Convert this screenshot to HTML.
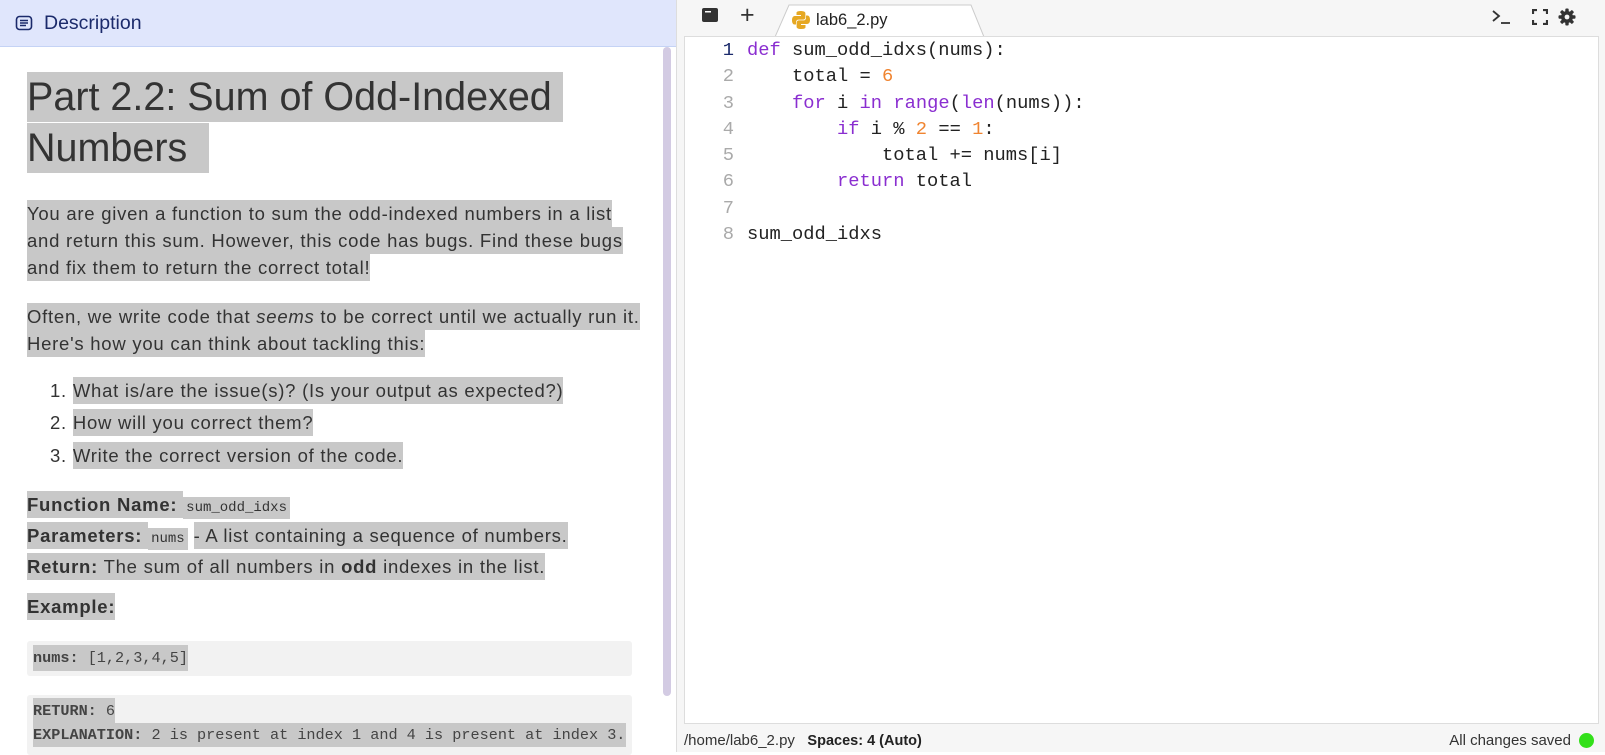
<!DOCTYPE html>
<html><head><meta charset="utf-8"><style>
*{margin:0;padding:0;box-sizing:border-box}
body{width:1605px;height:752px;overflow:hidden;background:#fff;font-family:"Liberation Sans",sans-serif;position:relative}
.left{position:absolute;left:0;top:0;width:677px;height:752px;border-right:1px solid #ddd;background:#fff}
.hdr{height:47px;background:#e0e6fc;border-bottom:1px solid #c5d3f5;display:flex;align-items:center;padding-left:15px;color:#1b2a6b;font-size:19.5px}
.hdr svg{margin-right:11px}
.sb{position:absolute;left:663px;top:47px;width:8px;height:649px;background:#d3cbe3;border-radius:4px}
.b{position:absolute;left:27px;color:#333}
.hl{background:#c8c8c8}
h1{font-weight:normal;font-size:39.5px;line-height:51px}
h1 .hl{padding:3px 0}
.p{font-size:18.5px;letter-spacing:0.75px;line-height:27px;white-space:nowrap}
.p .hl{padding:3px 0}
.m{font-family:"Liberation Mono",monospace;font-size:14px;letter-spacing:0;background:#c8c8c8;padding:3px 3px}
.pre{position:absolute;left:27px;width:605px;background:#f2f2f2;border-radius:3px;font-family:"Liberation Mono",monospace;font-size:15.2px;color:#444;padding:3px 6px;white-space:nowrap}
.right{position:absolute;left:677px;top:0;width:928px;height:752px;background:#f6f6f6}
.ed{position:absolute;left:7px;top:36px;width:915px;height:688px;background:#fff;border:1px solid #ddd}
.code{position:absolute;left:0;top:0;font-family:"Liberation Mono",monospace;font-size:18.75px;line-height:26.3px;color:#222;white-space:pre}
.ln{display:inline-block;width:49px;text-align:right;color:#aaa;margin-right:13px}
.k{color:#8a2ed0}.n{color:#f08430}
.st{position:absolute;left:7px;top:732px;font-size:15px;color:#333}
</style></head><body>
<div class="left">
<div class="hdr"><svg width="18" height="16" viewBox="0 0 18 16"><rect x="1.5" y="1.5" width="15" height="13" rx="3" fill="none" stroke="#1b2a6b" stroke-width="1.6"/><path d="M5 5.5h8M5 8h8M5 10.5h6" stroke="#1b2a6b" stroke-width="1.4"/></svg>Description</div>
<div class="sb"></div>
<div class="b" style="top:72px"><h1><span class="hl">Part 2.2: Sum of Odd-Indexed&nbsp;</span><br><span class="hl">Numbers&nbsp;&nbsp;</span></h1></div>
<div class="b p" style="top:200px"><span class="hl">You are given a function to sum the odd-indexed numbers in a list </span><br><span class="hl">and return this sum. However, this code has bugs. Find these bugs </span><br><span class="hl">and fix them to return the correct total!</span></div>
<div class="b p" style="top:303px"><span class="hl">Often, we write code that <i>seems</i> to be correct until we actually run it. </span><br><span class="hl">Here's how you can think about tackling this:</span></div>
<div class="b p" style="top:375px;left:50px;line-height:32.3px">
<div>1. <span class="hl">What is/are the issue(s)? (Is your output as expected?)</span></div>
<div>2. <span class="hl">How will you correct them?</span></div>
<div>3. <span class="hl">Write the correct version of the code.</span></div>
</div>
<div class="b p" style="top:491px;line-height:28px"><span class="hl"><b>Function Name:</b> </span> <span class="m">sum_odd_idxs</span><span class="hl"> </span><br><span class="hl"><b>Parameters:</b> </span> <span class="m">nums</span> <span class="hl">- A list containing a sequence of numbers. </span><br><span class="hl"><b>Return:</b> The sum of all numbers in <b>odd</b> indexes in the list. </span></div>
<div class="b p" style="top:593px;line-height:28px"><span class="hl"><b>Example: </b></span></div>
<div class="pre" style="top:641px;height:35px;line-height:29px"><span class="hl" style="padding:4px 0"><b>nums:</b> [1,2,3,4,5] </span></div>
<div class="pre" style="top:695px;height:60px;padding-top:4px;line-height:24px"><span class="hl" style="padding:4px 0"><b>RETURN:</b> 6 </span><br><span class="hl" style="display:block"><b>EXPLANATION:</b> 2 is present at index 1 and 4 is present at index 3.</span></div>
</div>
<div class="right">
<svg style="position:absolute;left:25px;top:8px" width="16" height="14"><rect x="0" y="0" width="16" height="14" rx="2" fill="#333"/><rect x="3" y="3" width="6" height="1.5" fill="#fff"/></svg>
<div style="position:absolute;left:63px;top:1px;font-size:25px;color:#333">+</div>
<svg style="position:absolute;left:98px;top:4px" width="210" height="33" viewBox="0 0 210 33"><path d="M0 33 L14 1 H196 L209 33" fill="#fff" stroke="#ccc"/><path d="M0 33H209" stroke="#fff" stroke-width="2"/></svg>
<svg style="position:absolute;left:114px;top:10px" width="20" height="20" viewBox="0 0 20 20"><path d="M9.5 1C5 1 5.5 3 5.5 3v2h4.5v1H4S1 5.7 1 10.2s2.6 4.3 2.6 4.3H5v-2.2S5 9.6 7.6 9.6h4.3s2.5 0 2.5-2.4V3.3S14.8 1 9.5 1z" fill="#e6a823"/><path d="M10.5 19c4.5 0 4-2 4-2v-2H10v-1h6s3 .3 3-4.2-2.6-4.3-2.6-4.3H15v2.2s0 2.7-2.6 2.7H8.1s-2.5 0-2.5 2.4v3.9S5.2 19 10.5 19z" fill="#e6a823"/></svg>
<div style="position:absolute;left:139px;top:11px;font-size:16.5px;color:#222">lab6_2.py</div>
<svg style="position:absolute;left:814px;top:9px" width="20" height="16"><path d="M2 2l6 5-6 5" fill="none" stroke="#333" stroke-width="1.8"/><path d="M10 14h9" stroke="#333" stroke-width="1.8"/></svg>
<svg style="position:absolute;left:855px;top:9px" width="16" height="16"><path d="M1 5V1h4M11 1h4v4M15 11v4h-4M5 15H1v-4" fill="none" stroke="#333" stroke-width="2.2"/></svg>
<svg style="position:absolute;left:881px;top:8px" width="18" height="18" viewBox="0 0 18 18"><g fill="#333"><circle cx="9" cy="9" r="6"/><rect x="7.3" y="0.5" width="3.4" height="17" rx="1"/><rect x="7.3" y="0.5" width="3.4" height="17" rx="1" transform="rotate(45 9 9)"/><rect x="7.3" y="0.5" width="3.4" height="17" rx="1" transform="rotate(90 9 9)"/><rect x="7.3" y="0.5" width="3.4" height="17" rx="1" transform="rotate(135 9 9)"/></g><circle cx="9" cy="9" r="2.4" fill="#f6f6f6"/></svg>
<div class="ed"><div class="code"><span class="ln" style="color:#1b2a6b">1</span><span class="k">def</span> sum_odd_idxs(nums):
<span class="ln">2</span>    total = <span class="n">6</span>
<span class="ln">3</span>    <span class="k">for</span> i <span class="k">in</span> <span class="k">range</span>(<span class="k">len</span>(nums)):
<span class="ln">4</span>        <span class="k">if</span> i % <span class="n">2</span> == <span class="n">1</span>:
<span class="ln">5</span>            total += nums[i]
<span class="ln">6</span>        <span class="k">return</span> total
<span class="ln">7</span>
<span class="ln">8</span>sum_odd_idxs</div></div>
<div class="st">/home/lab6_2.py&nbsp;&nbsp; <span style="font-weight:bold;color:#222;font-size:14.5px">Spaces: 4 (Auto)</span></div>
<div style="position:absolute;right:34px;top:732px;font-size:15px;color:#333">All changes saved</div>
<div style="position:absolute;left:902px;top:733px;width:15px;height:15px;border-radius:50%;background:#33e01a"></div>
</div>
</body></html>
